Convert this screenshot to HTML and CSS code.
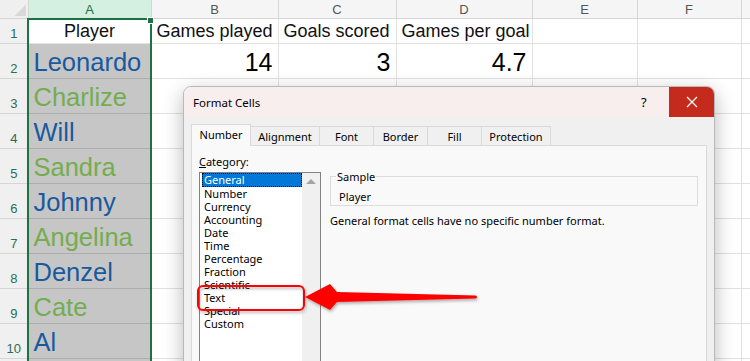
FILE: index.html
```html
<!DOCTYPE html>
<html lang="en">
<head>
    <meta charset="UTF-8">
    <meta name="viewport" content="width=device-width, initial-scale=1.0">
    <title>Format Cells</title>
    <link rel="stylesheet" href="styles.css">
</head>
<body>
    <div class="sheet">
        <table class="grid">
            <colgroup>
                <col class="c-row"><col class="c-a"><col class="c-b"><col class="c-c"><col class="c-d"><col class="c-e"><col class="c-f"><col class="c-g">
            </colgroup>
            <tr class="colhead">
                <th class="corner"></th><th class="on">A</th><th>B</th><th>C</th><th>D</th><th>E</th><th>F</th><th></th>
            </tr>
            <tr class="r1">
                <th>1</th><td class="active">Player</td><td>Games played</td><td>Goals scored</td><td>Games per goal</td><td></td><td></td><td></td>
            </tr>
            <tr class="row">
                <th>2</th><td class="name blue">Leonardo</td><td class="num">14</td><td class="num">3</td><td class="num">4.7</td><td></td><td></td><td></td>
            </tr>
            <tr class="row"><th>3</th><td class="name green">Charlize</td><td></td><td></td><td></td><td></td><td></td><td></td></tr>
            <tr class="row"><th>4</th><td class="name blue">Will</td><td></td><td></td><td></td><td></td><td></td><td></td></tr>
            <tr class="row"><th>5</th><td class="name green">Sandra</td><td></td><td></td><td></td><td></td><td></td><td></td></tr>
            <tr class="row"><th>6</th><td class="name blue">Johnny</td><td></td><td></td><td></td><td></td><td></td><td></td></tr>
            <tr class="row"><th>7</th><td class="name green">Angelina</td><td></td><td></td><td></td><td></td><td></td><td></td></tr>
            <tr class="row"><th>8</th><td class="name blue">Denzel</td><td></td><td></td><td></td><td></td><td></td><td></td></tr>
            <tr class="row"><th>9</th><td class="name green">Cate</td><td></td><td></td><td></td><td></td><td></td><td></td></tr>
            <tr class="row"><th>10</th><td class="name blue">Al</td><td></td><td></td><td></td><td></td><td></td><td></td></tr>
            <tr class="row"><th></th><td class="name"></td><td></td><td></td><td></td><td></td><td></td><td></td></tr>
        </table>
        <div class="selection"><span class="handle"></span></div>
    </div>

    <div class="dialog">
        <div class="titlebar">
            <span class="title">Format Cells</span>
            <span class="help">?</span>
            <span class="close">
                <svg width="12" height="12" viewBox="0 0 12 12"><path d="M1 1 L11 11 M11 1 L1 11" stroke="#fff" stroke-width="1.2"/></svg>
            </span>
        </div>
        <div class="body">
            <div class="tabs">
                <span class="tab current">Number</span>
                <span class="tab wide">Alignment</span>
                <span class="tab">Font</span>
                <span class="tab">Border</span>
                <span class="tab">Fill</span>
                <span class="tab wide">Protection</span>
            </div>
            <div class="panel">
                <div class="left">
                    <div class="label"><u>C</u>ategory:</div>
                    <div class="listbox">
                        <ul class="items">
                            <li class="picked">General</li>
                            <li>Number</li>
                            <li>Currency</li>
                            <li>Accounting</li>
                            <li>Date</li>
                            <li>Time</li>
                            <li>Percentage</li>
                            <li>Fraction</li>
                            <li>Scientific</li>
                            <li>Text</li>
                            <li>Special</li>
                            <li>Custom</li>
                        </ul>
                        <div class="scroll"><span class="up"></span></div>
                    </div>
                </div>
                <div class="right">
                    <fieldset class="sample">
                        <legend>Sample</legend>
                        <div class="sample-text">Player</div>
                    </fieldset>
                    <p class="desc">General format cells have no specific number format.</p>
                </div>
            </div>
        </div>
    </div>

    <svg class="callout" width="750" height="361" viewBox="0 0 750 361">
        <defs>
            <filter id="shadow" x="-10%" y="-50%" width="120%" height="200%">
                <feDropShadow dx="1" dy="2" stdDeviation="1.5" flood-color="#000" flood-opacity="0.3"/>
            </filter>
        </defs>
        <rect x="198" y="286" width="106" height="24" rx="5" fill="none" stroke="#ff0000" stroke-width="2" filter="url(#shadow)"/>
        <path d="M305 297 L330 284 L337 292 L476 295.5 Q478 297 476 298.5 L337 302 L330 310 Z" fill="#ff0000" filter="url(#shadow)"/>
    </svg>
</body>
</html>
```

FILE: styles.css
```css
body {
    margin: 0;
    width: 750px;
    height: 361px;
    overflow: hidden;
    background-color: #fff;
    font-family: 'Liberation Sans', Arial, sans-serif;
    position: relative;
}
.sheet {
    position: relative;
}
.grid {
    border-collapse: collapse;
    table-layout: fixed;
    width: 750px;
}
.c-row { width: 28px; }
.c-a { width: 123px; }
.c-b { width: 127px; }
.c-c { width: 118px; }
.c-d { width: 136px; }
.c-e { width: 105px; }
.c-f { width: 104px; }
.c-g { width: 9px; }
.grid td,
.grid th {
    padding: 0;
    border: 1px solid #e1e1e1;
    white-space: nowrap;
    overflow: hidden;
}
.colhead th {
    height: 18px;
    background-color: #f5f5f5;
    border-color: #d6d6d6;
    border-top: none;
    color: #555;
    font-weight: normal;
    font-size: 13px;
    font-family: 'Liberation Sans', Arial, sans-serif;
}
.colhead th.on {
    background-color: #d3f0e0;
    color: #1e7145;
}
.colhead .corner {
    background-color: #efefef;
    background-image: linear-gradient(135deg, transparent 55%, #d9d9d9 55%);
    background-size: 14px 12px;
    background-repeat: no-repeat;
    background-position: 12px 4px;
    border-left: none;
}
.grid tr > th:first-child {
    border-left: none;
}
.r1 th,
.row th {
    background-color: #f0f0f0;
    border-color: #d6d6d6;
    color: #2a6e55;
    font-weight: normal;
    font-size: 13px;
    vertical-align: bottom;
    padding-bottom: 2px;
}
.r1 td {
    height: 23px;
    font-size: 18px;
    color: #111;
    vertical-align: bottom;
    padding: 0 2px 1px 5px;
}
.r1 td.active {
    text-align: center;
    padding-left: 2px;
}
.row td {
    height: 33px;
    vertical-align: bottom;
    padding: 0 5px 1px 5px;
    font-size: 25.5px;
}
.row td.name {
    background-color: #c6c6c6;
    border-color: #adadad;
}
.row td.num {
    text-align: right;
    color: #000;
    font-size: 25px;
}
.blue { color: #185a9d; }
.green { color: #74ad50; }
.selection {
    position: absolute;
    left: 27px;
    top: 18px;
    width: 121px;
    height: 360px;
    border: 2px solid #1e7145;
    border-bottom: none;
}
.handle {
    position: absolute;
    right: -4px;
    top: -3px;
    width: 5px;
    height: 5px;
    background-color: #1e7145;
    border: 1px solid #fff;
}

/* dialog */
.dialog {
    position: absolute;
    left: 183px;
    top: 86px;
    width: 530px;
    height: 300px;
    border: 1px solid #b9b9b9;
    border-radius: 8px 8px 0 0;
    background-color: #f0f0f0;
    box-shadow: 0 6px 20px rgba(0, 0, 0, 0.28);
    font-family: 'Noto Sans', 'Open Sans', sans-serif;
    font-size: 11px;
    color: #000;
    overflow: hidden;
}
.titlebar {
    display: flex;
    align-items: center;
    height: 30px;
    background-color: #f9eeee;
}
.title {
    flex: 1;
    padding-left: 9px;
    font-size: 11.5px;
}
.help {
    width: 10px;
    font-size: 13px;
    margin-right: 18px;
}
.close {
    display: flex;
    align-items: center;
    justify-content: center;
    width: 45px;
    height: 30px;
    background-color: #c42b1c;
}
.body {
    padding: 6px 7px 0 7px;
}
.tabs {
    display: flex;
    align-items: flex-end;
    height: 22px;
}
.tab {
    width: 55px;
    height: 19px;
    line-height: 19px;
    box-sizing: border-box;
    text-align: center;
    border: 1px solid #d9d9d9;
    border-bottom: none;
    margin-right: -1px;
    background-color: #f0f0f0;
}
.tab.wide {
    width: 70px;
}
.tab.current {
    width: 60px;
    height: 22px;
    line-height: 20px;
    background-color: #f9f9f9;
    position: relative;
    z-index: 1;
    margin-bottom: -1px;
}
.panel {
    display: flex;
    gap: 9px;
    height: 240px;
    border: 1px solid #d9d9d9;
    background-color: #f9f9f9;
    padding: 9px 7px 0 7px;
}
.left {
    width: 122px;
}
.label {
    height: 17px;
    line-height: 14px;
}
.listbox {
    display: flex;
    height: 200px;
    border: 1px solid #828282;
    background-color: #fff;
}
.items {
    list-style: none;
    margin: 0;
    padding: 0 0 0 2px;
    flex: 1;
}
.items li {
    height: 13px;
    line-height: 13px;
    padding-left: 2px;
}
.items li.picked {
    background-color: #0078d7;
    color: #fff;
    border: 1px dotted #000;
    height: 12px;
    line-height: 12px;
    padding-left: 1px;
}
.scroll {
    width: 18px;
    background-color: #f0f0f0;
}
.up {
    display: block;
    width: 0;
    height: 0;
    margin: 6px auto 0;
    border-left: 5px solid transparent;
    border-right: 5px solid transparent;
    border-bottom: 5px solid #a3a3a3;
}
.right {
    flex: 1;
    padding-top: 14px;
    padding-right: 1px;
}
.sample {
    margin: 0;
    padding: 6px 8px 5px 8px;
    border: 1px solid #dcdcdc;
    height: 24px;
}
.sample legend {
    padding: 0 1px;
    margin-left: -3px;
}
.sample-text {
    line-height: 14px;
}
.desc {
    margin: 7px 0 0 0;
}
.callout {
    position: absolute;
    left: 0;
    top: 0;
}
```
